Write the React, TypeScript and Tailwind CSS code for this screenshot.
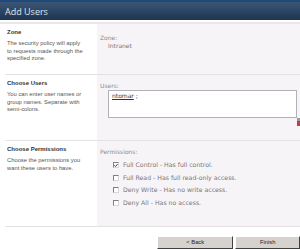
import React from 'react';

const sans = { fontFamily: '"Liberation Sans", Arial, sans-serif' };
const verdana = { fontFamily: '"DejaVu Sans", Verdana, sans-serif' };

interface Perm {
  label: string;
  checked: boolean;
}

const perms: Perm[] = [
  { label: 'Full Control - Has full control.', checked: true },
  { label: 'Full Read - Has full read-only access.', checked: false },
  { label: 'Deny Write - Has no write access.', checked: false },
  { label: 'Deny All - Has no access.', checked: false },
];

const Check: React.FC<{ checked: boolean }> = ({ checked }) => (
  <span className="flex h-[6px] w-[6px] shrink-0 items-center justify-center border border-t-[#808080] border-l-[#808080] border-b-[#d8d8d8] border-r-[#d8d8d8] bg-white">
    {checked && (
      <svg width="5" height="5" viewBox="0 0 5 5">
        <path d="M0.5 2.2 L2 3.7 L4.5 0.8" stroke="#222" strokeWidth="1.1" fill="none" />
      </svg>
    )}
  </span>
);

const Section: React.FC<{
  title: string;
  lines: string[];
  height: string;
  children: React.ReactNode;
}> = ({ title, lines, height, children }) => (
  <div className={`grid grid-cols-[92px_1fr] border-b border-[#e4e0e4] ${height}`}>
    <div className="pl-[2px] pt-[5px] bg-white" style={sans}>
      <div className="text-[6px] font-bold leading-[7px] text-[#333]">{title}</div>
      <div className="mt-[4px] text-[5.8px] leading-[7.5px] text-[#555]">
        {lines.map((l) => (
          <div key={l}>{l}</div>
        ))}
      </div>
    </div>
    <div className="bg-[#f7f4f7] pl-[3px]" style={verdana}>
      {children}
    </div>
  </div>
);

export default function App() {
  return (
    <div className="w-[300px] h-[249px] overflow-hidden bg-white">
      <div className="h-[2px] bg-[#1d4a78]" />
      <div className="flex h-[18px] items-center bg-gradient-to-b from-[#3b5675] to-[#1f3551] pl-[5px]">
        <span className="text-[9px] leading-none text-[#dfe6ee]" style={{ fontFamily: '"Open Sans", sans-serif' }}>
          Add Users
        </span>
      </div>
      <div className="h-[2px] bg-white" />
      <div className="h-[2px] bg-[#e8e8e8]" />

      <div className="pl-[5px]">
        <Section
          title="Zone"
          lines={['The security policy will apply', 'to requests made through the', 'specified zone.']}
          height="h-[51px]"
        >
          <div className="pt-[10px] text-[6px] leading-[8px] text-[#8a8a8a]">Zone:</div>
          <div className="pl-[8px] text-[6px] leading-[8px] text-[#777]">Intranet</div>
        </Section>

        <Section
          title="Choose Users"
          lines={['You can enter user names or', 'group names. Separate with', 'semi-colons.']}
          height="h-[66px]"
        >
          <div className="pt-[7px] text-[6px] leading-[8px] text-[#8a8a8a]">Users:</div>
          <div className="flex">
            <div className="ml-[8px] h-[28px] w-[189px] border border-[#b2b0b8] bg-white pl-[3px] pt-[1px] text-[6px] leading-[8px] text-[#333]">
              <span className="underline">ntomar</span> ;
            </div>
          </div>
          <div className="flex justify-end">
            <svg width="4" height="8" viewBox="0 0 4 8" className="-mr-[1px]">
              <rect x="0" y="0" width="4" height="3" fill="#9a9a9a" />
              <rect x="0" y="3" width="4" height="5" fill="#c8384a" />
            </svg>
          </div>
        </Section>

        <Section
          title="Choose Permissions"
          lines={['Choose the permissions you', 'want these users to have.']}
          height="h-[86px]"
        >
          <div className="pt-[7px] text-[6px] leading-[8px] text-[#8a8a8a]">Permissions:</div>
          <div className="mt-[5px] flex flex-col gap-[4.6px] pl-[13px]">
            {perms.map((p) => (
              <div key={p.label} className="flex items-center gap-[4px]">
                <Check checked={p.checked} />
                <span className="text-[6.2px] leading-[8px] text-[#777]">{p.label}</span>
              </div>
            ))}
          </div>
        </Section>
      </div>

      <div className="flex gap-[2px] pl-[157px] pt-[9px]" style={sans}>
        <button className="h-[13px] w-[83px] border border-t-white border-l-white border-b-[#404040] border-r-[#404040] bg-[#d6d3ce] text-[5.8px] text-[#222]">
          &lt; Back
        </button>
        <button className="h-[13px] w-[70px] border border-t-white border-l-white border-b-[#404040] border-r-[#404040] bg-[#d6d3ce] text-[5.8px] text-[#222]">
          Finish
        </button>
      </div>
    </div>
  );
}
